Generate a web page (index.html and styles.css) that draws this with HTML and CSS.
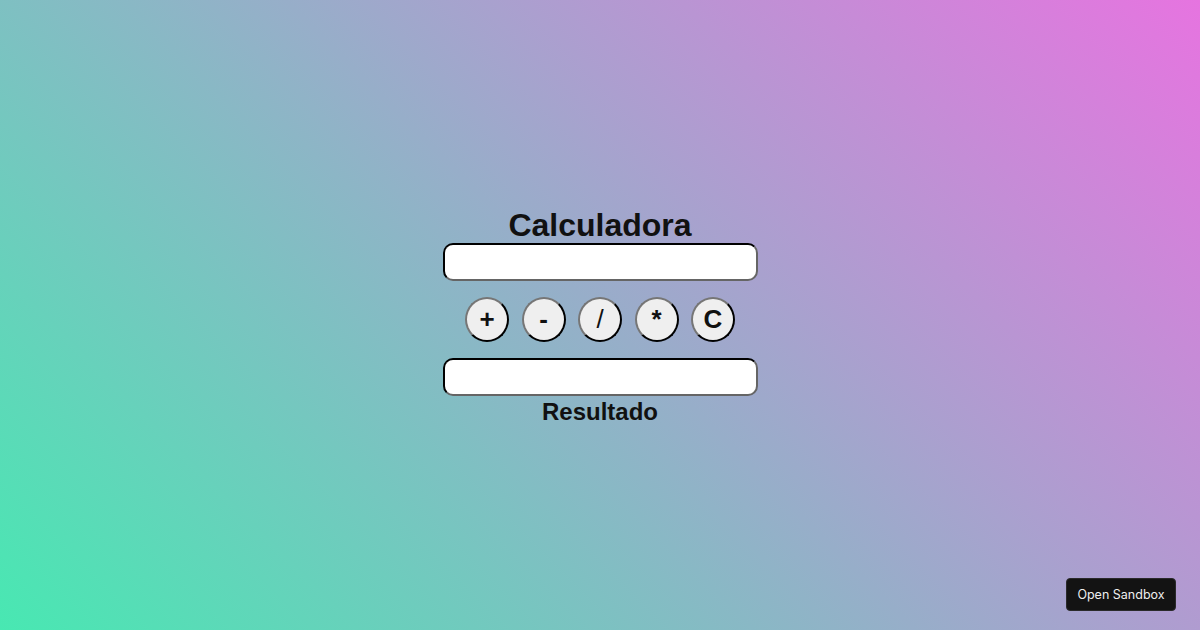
FILE: index.html
```html
<!DOCTYPE html>
<html lang="es">
<head>
<meta charset="utf-8">
<title>Calculadora</title>
<link rel="stylesheet" href="styles.css">
</head>
<body>
<main class="calc">
  <h1 class="title">Calculadora</h1>
  <input class="field" type="text">
  <div class="ops">
    <button class="op">+</button>
    <button class="op">-</button>
    <button class="op op-light">/</button>
    <button class="op">*</button>
    <button class="op">C</button>
  </div>
  <input class="field" type="text">
  <h2 class="label">Resultado</h2>
</main>
<a class="sandbox" href="#">Open Sandbox</a>
</body>
</html>
```
FILE: styles.css
```css
html, body {
  margin: 0;
  height: 100%;
}
body {
  background: linear-gradient(45deg, #48e8b2 0%, #e674e0 100%);
  font-family: "Liberation Sans", Arial, sans-serif;
  color: #111;
  display: flex;
  align-items: center;
  justify-content: center;
  overflow: hidden;
}
.calc {
  display: flex;
  flex-direction: column;
  align-items: center;
  margin-top: 2px;
}
.title {
  font-size: 32px;
  font-weight: bold;
  margin: 0;
  line-height: 36px;
}
.field {
  box-sizing: border-box;
  width: 315px;
  height: 38px;
  border: 2px inset #111;
  border-radius: 10px;
  background: #fff;
  margin: 0;
  padding: 0 8px;
}
.ops {
  display: flex;
  gap: 12.5px;
  margin: 16px 0 16px;
}
.op {
  box-sizing: border-box;
  width: 44px;
  height: 45px;
  border-radius: 50%;
  border: 2px outset #222;
  background: #efefef;
  font-family: "Liberation Sans", Arial, sans-serif;
  font-size: 26px;
  font-weight: bold;
  color: #111;
  padding: 0;
  display: flex;
  align-items: center;
  justify-content: center;
}
.op-light {
  font-weight: normal;
}
.label {
  font-size: 24px;
  font-weight: bold;
  margin: 3px 0 0;
  line-height: 26px;
}
.sandbox {
  position: fixed;
  right: 24px;
  bottom: 19px;
  width: 110px;
  height: 33px;
  box-sizing: border-box;
  background: #131313;
  color: #eee;
  border-radius: 4px;
  border: 1px solid #2a2a2a;
  font-family: "Inter", "Liberation Sans", sans-serif;
  font-size: 12.5px;
  text-decoration: none;
  display: flex;
  align-items: center;
  justify-content: center;
}
```
